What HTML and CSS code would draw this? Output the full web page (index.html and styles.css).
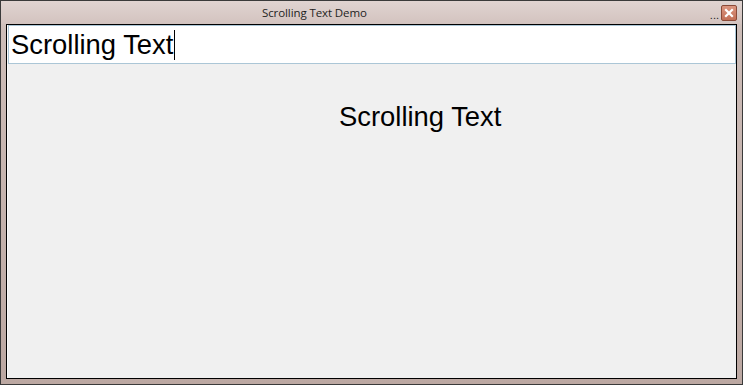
FILE: index.html
```html
<!DOCTYPE html>
<html lang="en">
<head>
    <meta charset="UTF-8">
    <title>Scrolling Text Demo</title>
    <link rel="stylesheet" href="styles.css">
</head>
<body>
    <div class="window">
        <div class="titlebar">
            <span class="title">Scrolling Text Demo</span>
            <span class="dots">...</span>
            <span class="close">
                <svg width="10" height="10" viewBox="0 0 10 10">
                    <path d="M2 2 L8 8 M8 2 L2 8" stroke="#fff" stroke-width="2.2" stroke-linecap="square"/>
                </svg>
            </span>
        </div>
        <div class="client">
            <div class="textbox"><span>Scrolling Text</span><span class="caret"></span></div>
            <div class="label">Scrolling Text</div>
        </div>
    </div>
</body>
</html>
```

FILE: styles.css
```css
html, body {
    margin: 0;
    padding: 0;
}
.window {
    width: 743px;
    height: 385px;
    box-sizing: border-box;
    border: 1px solid #3a3a3a;
    padding: 0 5px 5px 5px;
    background: linear-gradient(to bottom, #d9ccc9 0px, #cdbdb8 30px, #bca8a2 100%);
    display: flex;
    flex-direction: column;
}
.titlebar {
    height: 23px;
    display: flex;
    align-items: center;
    background: linear-gradient(to bottom, #e0d4d1, #d3c3bf);
    margin: 0 -5px;
}
.title {
    font-family: "Open Sans", "Noto Sans", sans-serif;
    font-size: 11.5px;
    color: #1e1e1e;
    padding-left: 261px;
    flex: 1;
    letter-spacing: -0.1px;
}
.dots {
    font-family: "Liberation Sans", sans-serif;
    font-size: 11px;
    color: #222;
    margin-right: 2px;
    margin-top: 4px;
}
.close {
    width: 14px;
    height: 14px;
    border: 1px solid #8a4a38;
    border-radius: 2px;
    background: linear-gradient(to bottom, #dc9680, #c26f56);
    display: flex;
    align-items: center;
    justify-content: center;
    margin-right: 5px;
    margin-top: 1px;
}
.client {
    flex: 1;
    border: 1px solid #000;
    background: #f0f0f0;
    padding: 0 0 0 1px;
    box-shadow: inset 1px 0 0 #fafafa;
}
.textbox {
    height: 39px;
    box-sizing: border-box;
    border: 1px solid #abc6d6;
    background: #fff;
    font-family: "Liberation Sans", Arial, sans-serif;
    font-size: 27.4px;
    color: #000;
    padding: 2px 0 0 2px;
    line-height: 33px;
    display: flex;
    align-items: flex-start;
}
.caret {
    width: 1px;
    height: 30px;
    background: #000;
    margin-top: 2px;
    margin-left: 1px;
}
.label {
    font-family: "Liberation Sans", Arial, sans-serif;
    font-size: 27.4px;
    color: #000;
    padding-left: 331px;
    margin-top: 37px;
    line-height: 31px;
}
```
